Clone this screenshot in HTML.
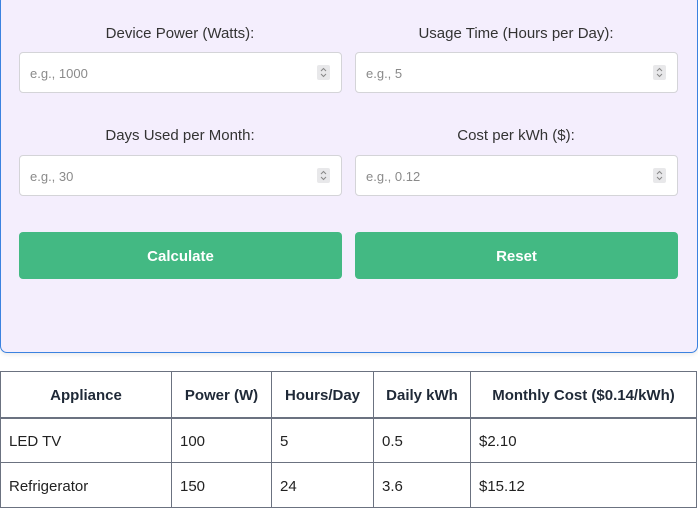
<!DOCTYPE html>
<html><head><meta charset="utf-8"><style>
*{box-sizing:border-box;margin:0;padding:0}
body{width:698px;height:507px;overflow:hidden;background:#fff;font-family:"Liberation Sans",sans-serif;position:relative}
.panel{position:absolute;left:0;top:-6px;width:698px;height:359px;background:#f4eefd;border:1.5px solid #3b82e0;border-radius:7px;box-shadow:0 2px 4px rgba(0,0,0,.08)}
.lbl{position:absolute;font-size:15px;color:#333;text-align:center;width:322px}
.inp{position:absolute;width:323px;height:41px;background:#fff;border:1px solid #d4d4d8;border-radius:4px;font-size:13px;color:#8a8a8a;padding:13px 0 0 10px}
.spin{position:absolute;right:11px;top:12px;width:13px;height:15px;background:#e8e8ea;border-radius:2px}
.spin svg{display:block}
.btn{position:absolute;width:323px;height:47px;background:#43b983;border-radius:4px;color:#fff;font-weight:bold;font-size:15px;text-align:center;line-height:50px}
table{position:absolute;left:0;top:371px;width:697px;border-collapse:collapse;font-size:15px;color:#222}
td,th{border:1px solid #6b7280;padding:3px 8px 0;text-align:left}
th{height:46px;text-align:center;font-weight:bold;border-bottom:2px solid #6b7280;color:#1f2937}
td{height:45px}
</style></head><body>
<div class="panel"></div>
<div class="lbl" style="left:19px;top:25px">Device Power (Watts):</div>
<div class="lbl" style="left:355px;top:25px">Usage Time (Hours per Day):</div>
<div class="inp" style="left:19px;top:52px">e.g., 1000<div class="spin"><svg width="13" height="15"><path d="M4 6l2.5-2.5L9 6M4 9l2.5 2.5L9 9" stroke="#888" fill="none"/></svg></div></div>
<div class="inp" style="left:355px;top:52px">e.g., 5<div class="spin"><svg width="13" height="15"><path d="M4 6l2.5-2.5L9 6M4 9l2.5 2.5L9 9" stroke="#888" fill="none"/></svg></div></div>
<div class="lbl" style="left:19px;top:127px">Days Used per Month:</div>
<div class="lbl" style="left:355px;top:127px">Cost per kWh ($):</div>
<div class="inp" style="left:19px;top:155px">e.g., 30<div class="spin"><svg width="13" height="15"><path d="M4 6l2.5-2.5L9 6M4 9l2.5 2.5L9 9" stroke="#888" fill="none"/></svg></div></div>
<div class="inp" style="left:355px;top:155px">e.g., 0.12<div class="spin"><svg width="13" height="15"><path d="M4 6l2.5-2.5L9 6M4 9l2.5 2.5L9 9" stroke="#888" fill="none"/></svg></div></div>
<div class="btn" style="left:19px;top:232px">Calculate</div>
<div class="btn" style="left:355px;top:232px">Reset</div>
<table>
<tr><th style="width:171px">Appliance</th><th style="width:100px">Power (W)</th><th style="width:102px">Hours/Day</th><th style="width:97px">Daily kWh</th><th>Monthly Cost ($0.14/kWh)</th></tr>
<tr><td>LED TV</td><td>100</td><td>5</td><td>0.5</td><td>$2.10</td></tr>
<tr><td>Refrigerator</td><td>150</td><td>24</td><td>3.6</td><td>$15.12</td></tr>
</table>
</body></html>
